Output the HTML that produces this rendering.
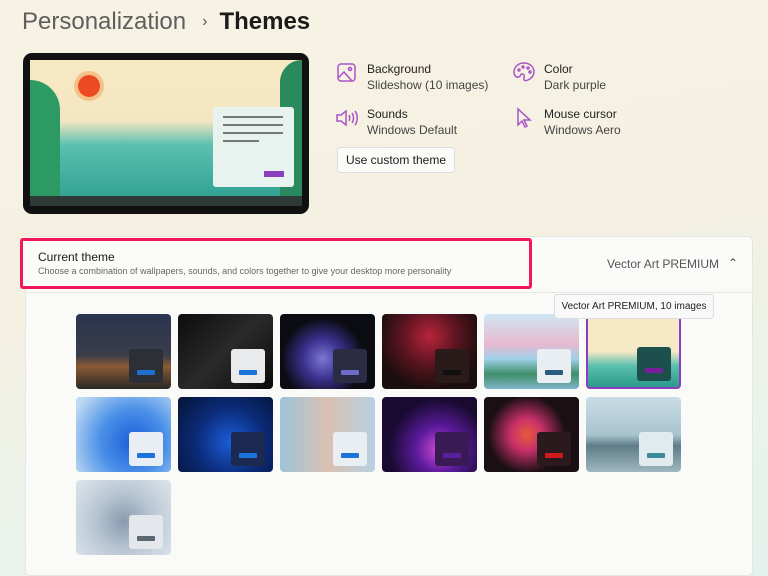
<!DOCTYPE html>
<html><head><meta charset="utf-8"><style>
*{margin:0;padding:0;box-sizing:border-box}
body{width:768px;height:576px;overflow:hidden;font-family:"Liberation Sans",sans-serif;background:linear-gradient(170deg,#f7f2e4 0%,#f4f0e2 45%,#e9f3ec 80%,#e3f1ec 100%);position:relative;color:#1b1b1b}
.abs{position:absolute}
h1{position:absolute;left:22px;top:8px;font-size:24px;font-weight:normal;color:#5e5e5e;white-space:nowrap}
h1 b{color:#1b1b1b;font-weight:bold}
h1 span{font-size:16px;margin:0 12px 0 16px;color:#555;position:relative;top:-3px}
.it{position:absolute;font-size:12px;line-height:16px;color:#222}
.it div:last-child{color:#444}
.btn{position:absolute;left:337px;top:147px;width:118px;height:26px;border:1px solid #ddd;border-radius:4px;background:#fbfbf9;font-size:12px;line-height:24px;text-align:center}
.panel{position:absolute;left:25px;top:236px;width:728px;height:340px;background:#fafbf8;border:1px solid #e4e6e1;border-radius:5px}
.hdr{position:absolute;left:20px;top:238px;width:512px;height:51px;border:3px solid #f0185a;border-radius:3px;background:#fbfbf8}
.t{position:absolute;width:95px;height:75px;border-radius:4px;overflow:hidden}
.t i{position:absolute;right:8px;bottom:6px;width:34px;height:34px;border-radius:3px}
.t i b{position:absolute;left:8px;bottom:8px;width:18px;height:5px;border-radius:1px}
</style></head><body>
<h1>Personalization<span>›</span><b>Themes</b></h1>
<div class="abs" style="left:23px;top:53px;width:286px;height:161px;background:#111;border-radius:9px"></div>
<div class="abs" style="left:30px;top:60px;width:272px;height:146px;background:linear-gradient(#f7e9c3 0%,#f3e6c2 42%,#5cc0b0 58%,#2a9e90 100%);overflow:hidden">
 <div class="abs" style="left:48px;top:15px;width:22px;height:22px;border-radius:50%;background:#ec4a23;box-shadow:0 0 0 4px #f5c28a"></div>
 <div class="abs" style="left:0;top:20px;width:30px;height:126px;background:#2e9a63;border-radius:0 40px 0 0"></div>
 <div class="abs" style="left:250px;top:0;width:22px;height:146px;background:#2b8a5d;border-radius:40px 0 0 0"></div>
 <div class="abs" style="left:0;top:136px;width:272px;height:10px;background:#2e3a38"></div>
 <div class="abs" style="left:183px;top:47px;width:81px;height:80px;background:#e8f3ef;border-radius:3px"></div>
 <div class="abs" style="left:193px;top:56px;width:60px;height:2px;background:#777;box-shadow:0 8px 0 #777,0 16px 0 #777"></div>
 <div class="abs" style="left:193px;top:80px;width:36px;height:2px;background:#777"></div>
 <div class="abs" style="left:234px;top:111px;width:20px;height:6px;background:#8a3fc0"></div>
</div>
<svg class="abs" style="left:336px;top:62px" width="22" height="22" viewBox="0 0 22 22" fill="none" stroke="#a855c8" stroke-width="1.5"><rect x="2" y="2" width="17" height="17" rx="3"/><path d="M2 16l6-6 8 9"/><circle cx="14" cy="7" r="1.5"/></svg>
<svg class="abs" style="left:335px;top:109px" width="24" height="18" viewBox="0 0 24 18" fill="none" stroke="#a855c8" stroke-width="1.5"><path d="M2 6h4l5-4v14l-5-4H2z"/><path d="M14 6c1 2 1 4 0 6M17 4c2 3 2 7 0 10M20 2c3 4 3 10 0 14"/></svg>
<svg class="abs" style="left:512px;top:61px" width="24" height="22" viewBox="0 0 24 22" fill="none" stroke="#a855c8" stroke-width="1.5"><path d="M12 2C6 2 2 6 2 11c0 4 3 6 5 5 2-1 1-3 3-3s3 2 2 4c-1 3 2 3 4 2 4-2 6-5 6-8 0-5-4-9-10-9z"/><circle cx="7" cy="9" r="1"/><circle cx="11" cy="6" r="1"/><circle cx="16" cy="7" r="1"/><circle cx="18" cy="11" r="1"/></svg>
<svg class="abs" style="left:514px;top:107px" width="20" height="22" viewBox="0 0 20 22" fill="none" stroke="#a855c8" stroke-width="1.5"><path d="M4 2v16l4-4 3 6 2-1-3-6h6z"/></svg>
<div class="it" style="left:367px;top:61px"><div>Background</div><div>Slideshow (10 images)</div></div>
<div class="it" style="left:367px;top:106px"><div>Sounds</div><div>Windows Default</div></div>
<div class="it" style="left:544px;top:61px"><div>Color</div><div>Dark purple</div></div>
<div class="it" style="left:544px;top:106px"><div>Mouse cursor</div><div>Windows Aero</div></div>
<div class="btn">Use custom theme</div>
<div class="panel"></div>
<div class="abs" style="left:26px;top:292px;width:726px;height:1px;background:#e6e8e3"></div>
<div class="hdr"></div>
<div class="abs" style="left:38px;top:250px;font-size:12px">Current theme</div>
<div class="abs" style="left:38px;top:266px;font-size:9px;color:#666;white-space:nowrap">Choose a combination of wallpapers, sounds, and colors together to give your desktop more personality</div>
<div class="abs" style="left:607px;top:257px;font-size:12px;color:#555">Vector Art PREMIUM</div>
<div class="abs" style="left:728px;top:256px;font-size:12px;color:#444">&#8963;</div>
<div class="abs" style="left:554px;top:294px;width:160px;height:25px;background:#f9f9f9;border:1px solid #ddd;border-radius:4px;font-size:10px;line-height:23px;text-align:center;color:#222;z-index:5">Vector Art PREMIUM, 10 images</div>
<div class="t" style="left:76px;top:314px;background:linear-gradient(#2b3450,#3a3d4a 55%,#8a5a33 70%,#2a2826)"><i style="background:#2c2f36"><b style="background:#1e6fd0"></b></i></div>
<div class="t" style="left:178px;top:314px;background:linear-gradient(135deg,#0c0c0c,#2a2a2a 50%,#0a0a0a)"><i style="background:#e8eaec"><b style="background:#1a73d8"></b></i></div>
<div class="t" style="left:280px;top:314px;background:radial-gradient(circle at 45% 60%,#7b76d8,#3a2f8a 30%,#0b0b12 60%)"><i style="background:#2c2b44"><b style="background:#6e6ac8"></b></i></div>
<div class="t" style="left:382px;top:314px;background:radial-gradient(circle at 50% 30%,#b8243a,#5a1420 40%,#1a0e0e 75%)"><i style="background:#2a1a1a"><b style="background:#111"></b></i></div>
<div class="t" style="left:484px;top:314px;background:linear-gradient(#cfe6f3,#e8b9cf 40%,#9fd0e8 60%,#3f8f6a 80%,#7fb4c7)"><i style="background:#e9eef2"><b style="background:#2a5c80"></b></i></div>
<div class="t" style="left:586px;top:314px;background:linear-gradient(#f5e9c6 50%,#5cbfae 70%,#2a9a8a);border:2px solid #8a3fc0"><i style="background:#1d4f4c"><b style="background:#7a1f9a"></b></i></div>
<div class="t" style="left:76px;top:397px;background:radial-gradient(circle at 60% 60%,#1a5ed8,#4a90e8 45%,#bcd8f2 90%)"><i style="background:#e9eef5"><b style="background:#1a73d8"></b></i></div>
<div class="t" style="left:178px;top:397px;background:radial-gradient(circle at 55% 60%,#1a5ed8,#0b2a78 50%,#061433)"><i style="background:#1c2a52"><b style="background:#1a73d8"></b></i></div>
<div class="t" style="left:280px;top:397px;background:linear-gradient(90deg,#9fc3da,#d9c1b0 50%,#b8d0e3)"><i style="background:#e9eef2"><b style="background:#1a73d8"></b></i></div>
<div class="t" style="left:382px;top:397px;background:radial-gradient(circle at 60% 70%,#d34ad6,#5a1a9a 30%,#180a30 65%)"><i style="background:#3a1a55"><b style="background:#5a1f9a"></b></i></div>
<div class="t" style="left:484px;top:397px;background:radial-gradient(circle at 45% 50%,#e85a3a,#c8306a 25%,#1a1014 60%)"><i style="background:#2a1a1e"><b style="background:#d01a1a"></b></i></div>
<div class="t" style="left:586px;top:397px;background:linear-gradient(#c9dde6,#a9c4cf 50%,#5e7d88 65%,#9fb8c0)"><i style="background:#e1eaee"><b style="background:#3d8a9a"></b></i></div>
<div class="t" style="left:76px;top:480px;background:radial-gradient(circle at 50% 55%,#8a9bb0,#b8c6d3 45%,#dfe6ec)"><i style="background:#e4e8ec"><b style="background:#5a6670"></b></i></div>
</body></html>
